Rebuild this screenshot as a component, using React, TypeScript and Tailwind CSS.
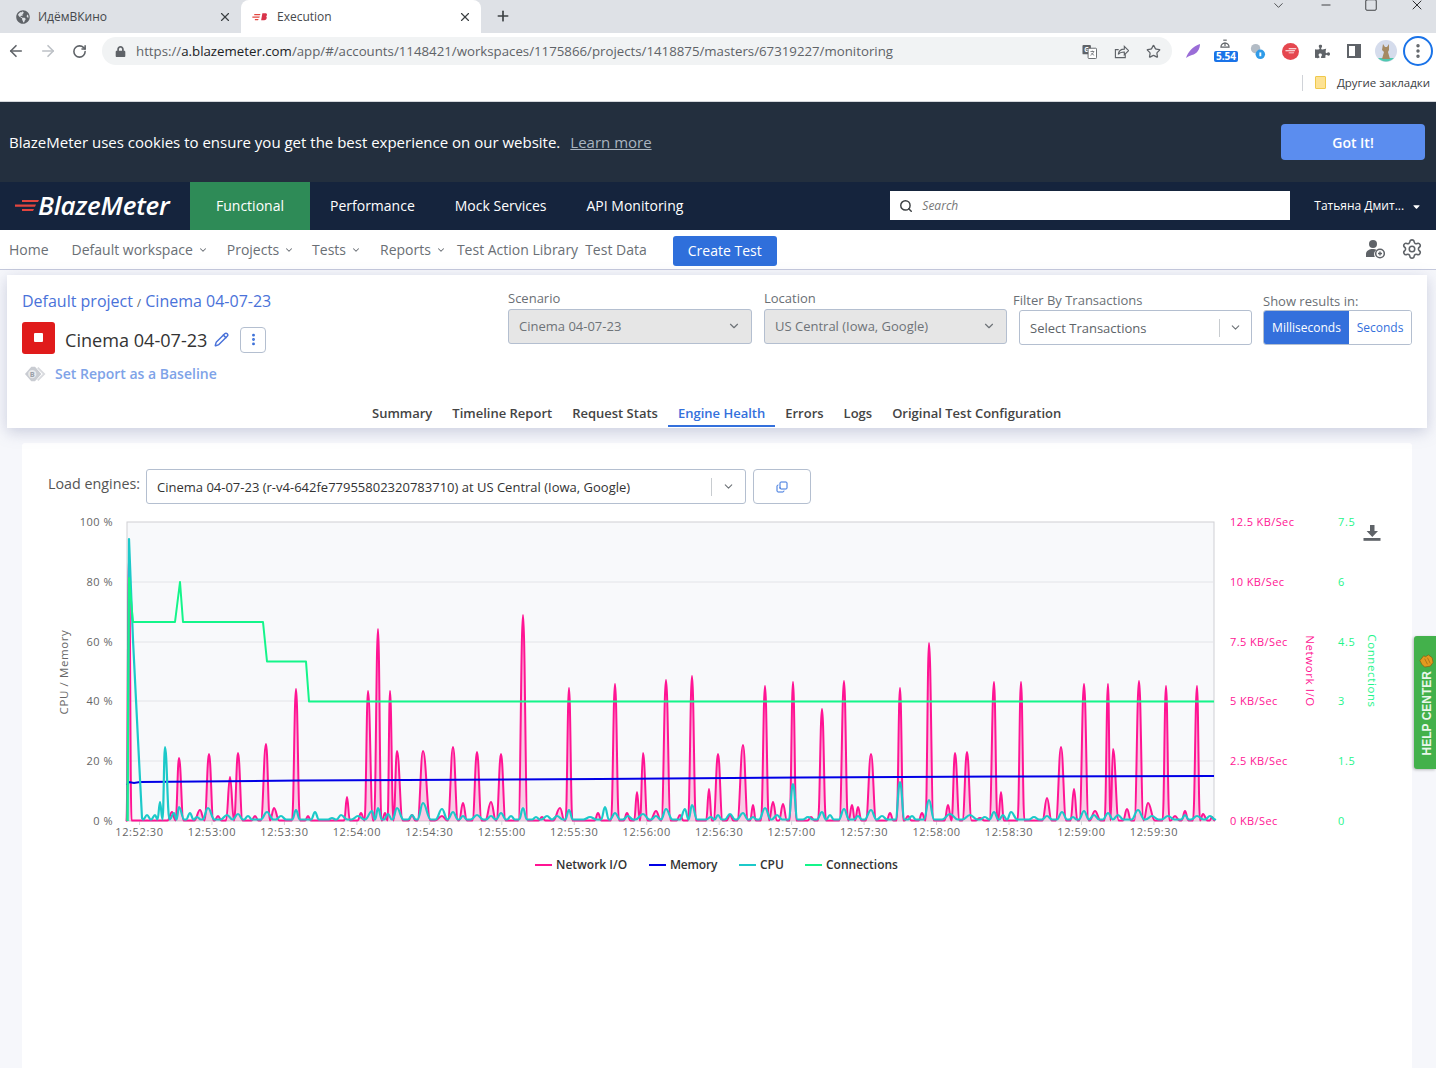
import type { ReactNode } from 'react';
import { ArrowLeft, ArrowRight, ChevronDown, Copy, MoreVertical, Pencil, Plus, RotateCw, Search, Settings, Star, X, Minus, Square } from 'lucide-react';
import { FaGlobeAmericas, FaLock, FaPuzzlePiece, FaSortDown } from 'react-icons/fa';

type Peak = [number, number, number?];

const PINK: Peak[] = [
  [129, 555, 2.2], [172, 812, 4], [179, 758, 4], [200, 810, 5], [209, 754, 4], [218, 816, 3], [230, 777, 3.5], [238, 753, 4],
  [255, 816, 3], [266, 744, 4.5], [274, 808, 4.5], [296, 689, 3.5], [308, 816, 2.5], [347, 797, 2.5], [361, 813, 3], [368, 691, 4.5],
  [378, 629, 3.5], [385, 813, 2.5], [390, 691, 3], [397, 751, 5], [412, 815, 3], [423, 751, 6.5], [442, 816, 6], [453, 747, 4.5],
  [463, 803, 3.5], [477, 752, 4], [491, 802, 5], [501, 754, 4], [523, 615, 4], [542, 817, 3], [560, 808, 6], [569, 688, 3],
  [598, 813, 3], [615, 684, 3.5], [627, 813, 3], [637, 792, 2.5], [643, 753, 4], [656, 811, 5], [666, 680, 4], [680, 815, 3],
  [692, 676, 3.5], [709, 789, 2.5], [718, 754, 4], [730, 815, 3], [743, 745, 5], [753, 805, 2.5], [765, 686, 3.5], [773, 802, 3.5],
  [783, 804, 3.5], [793, 682, 3], [811, 817, 3], [822, 709, 3.5], [844, 681, 4], [852, 805, 3], [858, 807, 3], [871, 754, 4.5],
  [890, 813, 3], [900, 688, 3], [908, 816, 3], [922, 813, 3], [929, 643, 4], [948, 805, 3], [955, 753, 4], [967, 752, 4],
  [980, 818, 4], [994, 682, 4], [1001, 792, 2.5], [1021, 682, 3], [1047, 798, 4], [1061, 747, 4.5], [1074, 789, 3], [1084, 684, 4],
  [1095, 811, 5], [1108, 684, 3], [1113, 749, 5], [1127, 809, 3.5], [1139, 681, 4], [1148, 803, 6], [1166, 686, 3], [1175, 816, 4],
  [1185, 811, 3], [1197, 686, 3.5], [1203, 814, 4], [1212, 817, 2],
];

const CYAN: Peak[] = [
  [147, 815, 3], [155, 815, 3], [160, 802, 5], [165, 747, 3.5], [174, 813, 4], [179, 807, 4], [190, 813, 3], [197, 817, 3],
  [208, 808, 5], [227, 815, 5], [238, 814, 5], [248, 816, 3], [267, 812, 5], [281, 816, 4], [296, 810, 3], [315, 812, 3], [332, 818, 3],
  [341, 815, 5], [358, 816, 5], [372, 811, 6], [378, 808, 3], [388, 814, 3], [397, 808, 5], [412, 815, 3], [423, 803, 6],
  [442, 809, 5], [453, 812, 5], [463, 816, 3], [477, 815, 5], [491, 816, 4], [501, 813, 5], [511, 816, 3], [523, 808, 3], [536, 817, 3],
  [547, 816, 5], [557, 816, 5], [569, 810, 3], [590, 817, 5], [605, 807, 3], [615, 813, 4], [628, 816, 4], [643, 814, 6], [656, 816, 4],
  [666, 809, 5], [685, 809, 4], [692, 805, 4], [711, 817, 4], [718, 815, 3], [730, 814, 4], [743, 813, 5], [753, 817, 3], [765, 808, 5],
  [777, 815, 4], [793, 784, 3.5], [808, 817, 4], [822, 812, 4], [830, 815, 3], [844, 809, 4], [858, 816, 3], [871, 810, 5], [882, 816, 4],
  [900, 782, 3.5], [912, 816, 3], [929, 800, 4], [950, 814, 6], [970, 815, 6], [985, 817, 4], [994, 812, 4], [1003, 815, 3], [1011, 812, 5],
  [1034, 817, 4], [1047, 816, 4], [1062, 812, 4], [1073, 817, 3], [1084, 811, 4], [1094, 815, 4], [1108, 813, 4], [1118, 815, 4], [1138, 810, 5],
  [1152, 816, 5], [1168, 816, 5], [1185, 815, 3], [1197, 816, 5], [1210, 816, 4],
];

const X_LABELS = ['12:52:30', '12:53:00', '12:53:30', '12:54:00', '12:54:30', '12:55:00', '12:55:30', '12:56:00', '12:56:30', '12:57:00', '12:57:30', '12:58:00', '12:58:30', '12:59:00', '12:59:30'];
const GRID = [582, 642, 701, 761];
const LEFT_AXIS: [string, number][] = [['100 %', 522], ['80 %', 582], ['60 %', 642], ['40 %', 701], ['20 %', 761], ['0 %', 821]];
const NET_AXIS: [string, number][] = [['12.5 KB/Sec', 522], ['10 KB/Sec', 582], ['7.5 KB/Sec', 642], ['5 KB/Sec', 701], ['2.5 KB/Sec', 761], ['0 KB/Sec', 821]];
const CONN_AXIS: [string, number][] = [['7.5', 522], ['6', 582], ['4.5', 642], ['3', 701], ['1.5', 761], ['0', 821]];

// turn a list of peaks into one curve that sits on the base line between them
function spikes(peaks: Peak[], base: number, start: string, scale: number) {
  let d = start;
  peaks.forEach(([x, y, w0 = 3], i) => {
    const w = w0 * scale;
    const prev = peaks[i - 1];
    const next = peaks[i + 1];
    const left = prev ? Math.max(x - w, (prev[0] + x) / 2) : x - w;
    const right = next ? Math.min(x + w, (next[0] + x) / 2) : x + w;
    const a = x - left;
    const b = right - x;
    d += ` L${left} ${base} C${left + a * 0.45} ${base} ${x - a * 0.42} ${y} ${x} ${y} C${x + b * 0.42} ${y} ${right - b * 0.45} ${base} ${right} ${base}`;
  });
  return d + ` L1214 ${base}`;
}

function BrowserTab({ active, icon, title }: { active?: boolean; icon: ReactNode; title: string }) {
  return (
    <div className={active ? 'flex h-[33px] w-[240px] items-center rounded-t-lg bg-white pl-[11px] pr-[9px]' : 'flex h-[33px] w-[241px] items-center pl-[16px] pr-[9px]'}>
      {icon}
      <span className="ml-[8px] flex-1 text-[12px] text-[#45484c]">{title}</span>
      <X className="h-[14px] w-[14px] text-[#3c4043]" strokeWidth={2} />
    </div>
  );
}

function BlazeMark({ className }: { className: string }) {
  return (
    <svg viewBox="0 0 26 16" className={className}>
      <path d="M8 2h17l-1 2H8zM1 6.5h21l-1 2.2H1zM8 11h12l-1 2H8z" fill="#e2453f" />
    </svg>
  );
}

function FieldSelect({ label, value, className, labelClass }: { label: string; value: string; className: string; labelClass: string }) {
  return (
    <div className={className}>
      <div className={labelClass}>{label}</div>
      <div className="flex h-[35px] items-center justify-between rounded-[3px] border border-[#b4bfd0] bg-[#e6e6e6] pb-[1px] pl-[10px] pr-[10px] text-[13px] text-[#6e7378]">
        <span className="pt-[2px]">{value}</span>
        <ChevronDown className="h-[14px] w-[14px] text-[#6e7378]" />
      </div>
    </div>
  );
}

function Chart() {
  return (
    <svg viewBox="22 510 1390 375" className="block h-[375px] w-[1390px]" style={{ fontFamily: '"Open Sans", sans-serif' }}>
      <rect x="127" y="522" width="1087" height="299" fill="#f8f9fb" stroke="#cfcfd4" />
      {GRID.map((y) => (
        <line key={y} x1="127" x2="1214" y1={y} y2={y} stroke="#e3e4e8" />
      ))}
      {X_LABELS.map((t, i) => {
        const x = 139.5 + i * 72.46;
        return (
          <g key={t}>
            <line x1={x} x2={x} y1="821" y2="825" stroke="#d5d6da" />
            <text x={x} y="836" textAnchor="middle" fontSize="11" letterSpacing="0.6" fill="#666">{t}</text>
          </g>
        );
      })}
      {LEFT_AXIS.map(([t, y]) => (
        <text key={t} x="113" y={y + 4} textAnchor="end" fontSize="11" letterSpacing="0.5" fill="#666">{t}</text>
      ))}
      {NET_AXIS.map(([t, y]) => (
        <text key={t} x="1230" y={y + 4} fontSize="11" letterSpacing="0.4" fill="#ff1493">{t}</text>
      ))}
      {CONN_AXIS.map(([t, y]) => (
        <text key={t} x="1338" y={y + 4} fontSize="11" letterSpacing="0.6" fill="#1ef58a">{t}</text>
      ))}
      <text transform="translate(68 672) rotate(-90)" textAnchor="middle" fontSize="11.5" letterSpacing="0.6" fill="#666">CPU / Memory</text>
      <text transform="translate(1306 671) rotate(90)" textAnchor="middle" fontSize="11.5" letterSpacing="0.6" fill="#ff1493">Network I/O</text>
      <text transform="translate(1368 671) rotate(90)" textAnchor="middle" fontSize="11.5" letterSpacing="0.6" fill="#1ef58a">Connections</text>

      <path d={spikes(PINK, 820.5, 'M127.5 821', 1.15)} fill="#ff1493" fillOpacity="0.2" stroke="#ff1493" strokeWidth="2" strokeLinejoin="round" />
      <path d="M127 785 L129 782 L134 783 L140 782 L300 780.5 L600 779 L800 777.5 L1000 776.5 L1214 776" fill="none" stroke="#0000e6" strokeWidth="2" />
      <path d={spikes(CYAN, 819.5, 'M127.5 821 L129 539 L133 640 L138 740 L142 818', 1.3)} fill="none" stroke="#1cc9c9" strokeWidth="2.2" strokeLinejoin="round" />
      <path d="M127.5 821 L129 578 L133 622 L175 622 L180 582 L183 622 L263 622 L267 661.5 L306 661.5 L309 701.5 L1214 701.5" fill="none" stroke="#14f58a" strokeWidth="2" strokeLinejoin="round" />

      <g fill="#5f6368">
        <path d="M1370 525h4.500v6h3.500l-5.700 6-5.700-6h3.400z" />
        <rect x="1363.500" y="538" width="17" height="2.800" />
      </g>

      <g fontSize="12" fontWeight="600" fill="#333">
        <line x1="535" x2="552" y1="865" y2="865" stroke="#ff1493" strokeWidth="2" />
        <text x="556" y="869">Network I/O</text>
        <line x1="649" x2="666" y1="865" y2="865" stroke="#0000e6" strokeWidth="2" />
        <text x="670" y="869" letterSpacing="-0.2">Memory</text>
        <line x1="739" x2="756" y1="865" y2="865" stroke="#1cc9c9" strokeWidth="2" />
        <text x="760" y="869">CPU</text>
        <line x1="805" x2="822" y1="865" y2="865" stroke="#14f58a" strokeWidth="2" />
        <text x="826" y="869">Connections</text>
      </g>
    </svg>
  );
}

export default function App() {
  return (
    <div className="relative h-[1068px] w-[1436px] overflow-hidden bg-[#f6f7fb] font-['Open_Sans',sans-serif]">
      {/* browser frame */}
      <div className="flex h-[33px] items-start bg-[#dee1e6]">
        <BrowserTab icon={<FaGlobeAmericas className="h-[14px] w-[14px] text-[#5f6368]" />} title="ИдёмВКино" />
        <BrowserTab active icon={<svg viewBox="0 0 26 16" className="h-[10px] w-[17px]"><path d="M3 3h10l-1 2H3zM0 7h12l-1 2H0zM4 11h6l-1 2H4z" fill="#e2453f" /><path d="M16 2h5c3 0 3 4 1 5 2 1 1 6-3 6h-5z" fill="#d8334a" /></svg>} title="Execution" />
        <Plus className="ml-[14px] mt-[8px] h-[16px] w-[16px] text-[#3c4043]" strokeWidth={2.5} />
        <div className="ml-auto flex text-[#202124]">
          <ChevronDown className="mr-[33px] mt-[-2px] h-[15px] w-[15px]" strokeWidth={1.2} />
          <Minus className="mr-[31px] mt-[-2px] h-[14px] w-[14px]" strokeWidth={1.4} />
          <Square className="mr-[31px] mt-[-2px] h-[14px] w-[14px]" strokeWidth={1.4} />
          <X className="mr-[11px] mt-[-3px] h-[16px] w-[16px]" strokeWidth={1.4} />
        </div>
      </div>
      <div className="flex h-[36px] items-center bg-white pl-[7px]">
        <ArrowLeft className="h-[18px] w-[18px] text-[#5f6368]" strokeWidth={2.2} />
        <ArrowRight className="ml-[14px] h-[18px] w-[18px] text-[#bdc1c6]" strokeWidth={2.2} />
        <RotateCw className="ml-[15px] h-[15px] w-[15px] text-[#5f6368]" strokeWidth={2.5} />
        <div className="ml-[15px] flex h-[28px] w-[1070px] items-center rounded-full bg-[#f1f3f4] pl-[13px]">
          <FaLock className="h-[11px] w-[11px] text-[#5f6368]" />
          <span className="ml-[10px] flex-1 pt-[1px] text-[13.25px] text-[#5f6368]">https://<span className="text-[#202124]">a.blazemeter.com</span>/app/#/accounts/1148421/workspaces/1175866/projects/1418875/masters/67319227/monitoring</span>
          <svg viewBox="0 0 16 16" className="h-[15px] w-[15px]"><rect x="0.5" y="1" width="9" height="10" rx="1" fill="#5f6368" /><text x="2.500" y="8.500" fontSize="7" fontWeight="700" fill="#fff">G</text><rect x="6.500" y="4.500" width="9" height="11" rx="1" fill="#fff" stroke="#5f6368" /><path d="M9 8h4M11 7v1M12.500 8c-.5 2-2 3.500-3.500 4M10 9.500c.5 1 1.500 2 3 2.500" stroke="#5f6368" fill="none" strokeWidth="0.8" /></svg>
          <svg viewBox="0 0 16 16" className="ml-[17px] h-[15px] w-[15px]" fill="none" stroke="#5f6368" strokeWidth="1.2"><path d="M5 6H1.500v8.500h10.500V11" /><path d="M4.500 11c.5-3.500 3-5.500 6.500-5.500V2.500l4.500 4.500-4.500 4.500V8.500c-3 0-5 .5-6.500 2.500z" /></svg>
          <Star className="ml-[17px] mr-[11px] h-[15px] w-[15px] text-[#5f6368]" strokeWidth={2} />
        </div>
        <div className="ml-[13px] flex items-center">
          <svg viewBox="0 0 16 16" className="h-[16px] w-[16px]"><path d="M1 15C3 9 8 3 15 1c0 5-3 10-8 11-2 .5-3 1-6 3z" fill="#9a6dd7" /></svg>
          <div className="relative ml-[12px] h-[24px] w-[24px]">
            <svg viewBox="0 0 24 24" className="h-[14px] w-[24px]"><path d="M5 14a7 7 0 0 1 14 0z" fill="none" stroke="#5f6368" strokeWidth="2" /><rect x="9" y="1" width="6" height="2" fill="#5f6368" /><path d="M12 6v6" stroke="#5f6368" strokeWidth="2" /></svg>
            <span className="absolute bottom-[1px] left-[1px] rounded-[2px] bg-[#1a73e8] px-[2px] text-[10px] font-bold leading-[11px] text-white">5.54</span>
          </div>
          <svg viewBox="0 0 18 18" className="ml-[12px] h-[17px] w-[17px]"><circle cx="7" cy="6" r="5" fill="#b3bcc6" /><circle cx="12" cy="12" r="5" fill="#2f9be8" /><rect x="11" y="10" width="2" height="4" fill="#fff" /></svg>
          <div className="ml-[16px] flex h-[17px] w-[17px] items-center justify-center rounded-full bg-[#e5474f]"><svg viewBox="0 0 26 16" className="h-[8px] w-[12px]"><path d="M8 2h17l-1 2H8zM1 6.500h21l-1 2.200H1zM8 11h12l-1 2H8z" fill="#fff" /></svg></div>
          <FaPuzzlePiece className="ml-[16px] h-[15px] w-[15px] text-[#5f6368]" />
          <div className="ml-[17px] flex h-[14px] w-[14px] justify-end border-2 border-[#5f6368] bg-white"><div className="h-full w-[4px] bg-[#5f6368]" /></div>
          <svg viewBox="0 0 22 22" className="ml-[14px] h-[22px] w-[22px]"><circle cx="11" cy="11" r="11" fill="#d5dcec" /><path d="M3 18a11 11 0 0 0 16 0z" fill="#4fc9b0" /><path d="M8 4l2 3h2l2-3 0 6-1 2 2 7H7l2-7-2-2z" fill="#a58a63" /></svg>
          <div className="ml-[6px] flex h-[30px] w-[30px] items-center justify-center rounded-full border-2 border-[#1a73e8]">
            <MoreVertical className="h-[18px] w-[18px] text-[#5f6368]" strokeWidth={2.6} />
          </div>
        </div>
      </div>
      <div className="flex h-[33px] items-center justify-end border-b border-[#d4d7dc] bg-white pb-[5px] pr-[6px]">
        <span className="h-[16px] w-px bg-[#d0d3d8]" />
        <span className="ml-[12px] h-[13px] w-[11px] rounded-[1px] border border-[#f0c94c] bg-[#fde293]" />
        <span className="ml-[11px] text-[11.5px] text-[#3c4043]">Другие закладки</span>
      </div>

      {/* cookie banner */}
      <div className="flex h-[80px] items-center justify-between bg-[#232f3e] pl-[9px] pr-[11px]">
        <div className="text-[15px] text-white">
          BlazeMeter uses cookies to ensure you get the best experience on our website.
          <span className="ml-[10px] text-[#a9b4c0] underline">Learn more</span>
        </div>
        <div className="flex h-[36px] w-[144px] items-center justify-center rounded-[4px] bg-[#5b8def] text-[14px] font-semibold text-white">Got It!</div>
      </div>

      {/* main nav */}
      <div className="flex h-[48px] items-center bg-[#15243d] pb-[1px] text-[14px] text-white">
        <BlazeMark className="ml-[14px] h-[16px] w-[26px]" />
        <span className="ml-[-2px] w-[152px] text-[26px] font-semibold italic tracking-[-0.2px]">BlazeMeter</span>
        <div className="flex h-[48px] w-[120px] items-center justify-center bg-[#2e8b57]">Functional</div>
        <span className="ml-[20px]">Performance</span>
        <span className="ml-[40px]">Mock Services</span>
        <span className="ml-[40px]">API Monitoring</span>
        <div className="ml-[207px] flex h-[29px] w-[400px] items-center bg-white pl-[9px]">
          <Search className="h-[14px] w-[14px] text-[#3c4043]" strokeWidth={2.5} />
          <span className="ml-[9px] text-[12px] italic text-[#777]">Search</span>
        </div>
        <span className="ml-[24px] text-[12px]">Татьяна Дмит...</span>
        <FaSortDown className="mb-[3px] ml-[7px] h-[11px] w-[11px]" />
      </div>

      {/* sub nav */}
      <div className="flex h-[40px] items-center border-b border-[#c5c9dc] bg-white text-[14px] text-[#6a6f75]">
        <span className="ml-[9px]">Home</span>
        <span className="ml-[23px]">Default workspace</span>
        <ChevronDown className="ml-[5px] h-[10px] w-[10px]" strokeWidth={2.5} />
        <span className="ml-[19px]">Projects</span>
        <ChevronDown className="ml-[5px] h-[10px] w-[10px]" strokeWidth={2.5} />
        <span className="ml-[18px]">Tests</span>
        <ChevronDown className="ml-[5px] h-[10px] w-[10px]" strokeWidth={2.5} />
        <span className="ml-[19px]">Reports</span>
        <ChevronDown className="ml-[5px] h-[10px] w-[10px]" strokeWidth={2.5} />
        <span className="ml-[11px]">Test Action Library</span>
        <span className="ml-[7px]">Test Data</span>
        <div className="ml-[26px] mt-[2px] flex h-[30px] w-[104px] items-center justify-center rounded-[3px] bg-[#2f6fdb] text-white">Create Test</div>
        <svg viewBox="0 0 20 20" className="mb-[2px] ml-auto h-[20px] w-[20px]" fill="#5f6368">
          <circle cx="8" cy="5" r="4" />
          <path d="M1 18v-3c0-3 3-5 7-5 1.500 0 2.500.3 3.500.7A6 6 0 0 0 9.800 18z" />
          <circle cx="15" cy="14.500" r="4.300" fill="none" stroke="#5f6368" strokeWidth="1.500" />
          <path d="M15 12.500v4M13 14.500h4" stroke="#5f6368" strokeWidth="1.400" />
        </svg>
        <Settings className="mb-[2px] ml-[16px] mr-[13px] h-[22px] w-[22px] text-[#5f6368]" strokeWidth={1.7} />
      </div>

      {/* report header */}
      <div className="relative z-10 ml-[7px] mt-[5px] h-[153px] w-[1420px] bg-white shadow-[0_4px_14px_rgba(120,130,170,0.35)]">
        <div className="flex h-[129px] items-start pl-[15px]">
          <div className="w-[486px] pt-[15px]">
            <div className="text-[16px] leading-[22px] text-[#4a72d9]">Default project <span className="text-[11px] text-[#555]">/</span> Cinema 04-07-23</div>
            <div className="mt-[8px] flex items-center">
              <div className="flex h-[32px] w-[33px] items-center justify-center rounded-[3px] bg-[#e01b1b]"><span className="mb-[2px] h-[9px] w-[9px] rounded-[1px] bg-white" /></div>
              <span className="ml-[10px] pt-[5px] text-[18.1px] text-[#333]">Cinema 04-07-23</span>
              <Pencil className="ml-[7px] mt-[3px] h-[15px] w-[15px] text-[#4a72d9]" strokeWidth={2.3} />
              <div className="ml-[11px] mt-[3px] flex h-[26px] w-[26px] items-center justify-center rounded-[4px] border border-[#b4bfd0]"><MoreVertical className="h-[15px] w-[15px] text-[#3a6fd8]" strokeWidth={2.6} /></div>
            </div>
            <div className="mt-[9px] flex items-center">
              <svg viewBox="0 0 24 16" className="ml-[2px] h-[16px] w-[22px]"><path d="M8 0h4l7 8-7 8H8L1 8z" fill="#c9ccd2" /><path d="M15 1l7 7-7 7" fill="none" stroke="#d8dade" strokeWidth="2" /><circle cx="9" cy="8" r="4.500" fill="#e8e9ec" /><text x="6.200" y="11" fontSize="8" fontWeight="700" fill="#9aa0a8">B</text></svg>
              <span className="ml-[9px] text-[14px] font-semibold text-[#7ea3e8]">Set Report as a Baseline</span>
            </div>
          </div>
          <FieldSelect label="Scenario" value="Cinema 04-07-23" className="w-[244px] pt-[14px]" labelClass="h-[20px] text-[13px] leading-[18px] text-[#6a6f75]" />
          <FieldSelect label="Location" value="US Central (Iowa, Google)" className="ml-[12px] w-[243px] pt-[14px]" labelClass="h-[20px] text-[13px] leading-[18px] text-[#6a6f75]" />
          <div className="ml-[6px] w-[239px] pt-[16px]">
            <div className="h-[19px] text-[13px] leading-[18px] text-[#6a6f75]">Filter By Transactions</div>
            <div className="ml-[6px] flex h-[35px] items-center rounded-[3px] border border-[#b4bfd0] bg-white pl-[10px] text-[13px] text-[#5d6368]">
              <span className="flex-1 pt-[2px]">Select Transactions</span>
              <span className="h-[18px] w-px bg-[#c8ccd0]" />
              <ChevronDown className="mx-[9px] h-[13px] w-[13px] text-[#6e7378]" />
            </div>
          </div>
          <div className="ml-[11px] w-[149px] pt-[17px]">
            <div className="h-[18px] text-[13px] leading-[18px] text-[#6a6f75]">Show results in:</div>
            <div className="flex h-[35px] overflow-hidden rounded-[3px] border border-[#b4bfd0] text-[12px]">
              <div className="flex w-[85px] items-center justify-center bg-[#3470dc] text-white">Milliseconds</div>
              <div className="flex flex-1 items-center justify-center bg-white text-[#3470dc]">Seconds</div>
            </div>
          </div>
        </div>
        <div className="flex h-[24px] items-start pl-[355px] text-[13px] font-semibold text-[#444]">
          <span className="px-[10px]">Summary</span>
          <span className="px-[10px]">Timeline Report</span>
          <span className="px-[10px]">Request Stats</span>
          <span className="h-[23px] border-b-2 border-[#3470dc] px-[10px] text-[#3470dc]">Engine Health</span>
          <span className="px-[10px]">Errors</span>
          <span className="px-[10px]">Logs</span>
          <span className="px-[10px]">Original Test Configuration</span>
        </div>
      </div>

      {/* engine health */}
      <div className="ml-[22px] mt-[15px] h-[640px] w-[1390px] rounded-t-[3px] bg-white">
        <div className="flex items-center pl-[26px] pt-[26px] text-[#333]">
          <span className="w-[98px] pb-[5px] text-[14.3px] text-[#555]">Load engines:</span>
          <div className="flex h-[35px] w-[600px] items-center rounded-[3px] border border-[#b4bfd0] pl-[10px] text-[13px]">
            <span className="flex-1 pt-[2px]">Cinema 04-07-23 (r-v4-642fe77955802320783710) at US Central (Iowa, Google)</span>
            <span className="h-[18px] w-px bg-[#c8ccd0]" />
            <ChevronDown className="mx-[10px] h-[13px] w-[13px] text-[#6e7378]" />
          </div>
          <div className="ml-[7px] flex h-[35px] w-[58px] items-center justify-center rounded-[4px] border border-[#b4bfd0]"><Copy className="h-[12px] w-[12px] -rotate-90 text-[#3470dc]" strokeWidth={2} /></div>
        </div>
        <div className="mt-[6px]">
          <Chart />
        </div>
      </div>

      {/* help tab floats over the page edge */}
      <div className="absolute left-[1414px] top-[636px] flex h-[133px] w-[22px] flex-col items-center rounded-l-[3px] bg-[#43b14b] pl-[3px] pt-[17px] shadow-[-1px_1px_3px_rgba(0,0,0,0.25)]">
        <svg viewBox="0 0 16 16" className="h-[15px] w-[15px]"><path d="M1 8l4-5 2 1 3-2 4 3 1 5-3 4-6 1-3-3z" fill="#e39a1f" stroke="#8a5a10" strokeWidth="0.7" /><path d="M6 6l3 6M9 5l3 6" stroke="#8a5a10" strokeWidth="0.6" /></svg>
        <span className="mt-[3px] rotate-180 text-[12px] font-semibold leading-[16px] text-[#eaf7ea] [font-family:'Liberation_Sans',sans-serif] [writing-mode:vertical-rl]">HELP CENTER</span>
      </div>
    </div>
  );
}
